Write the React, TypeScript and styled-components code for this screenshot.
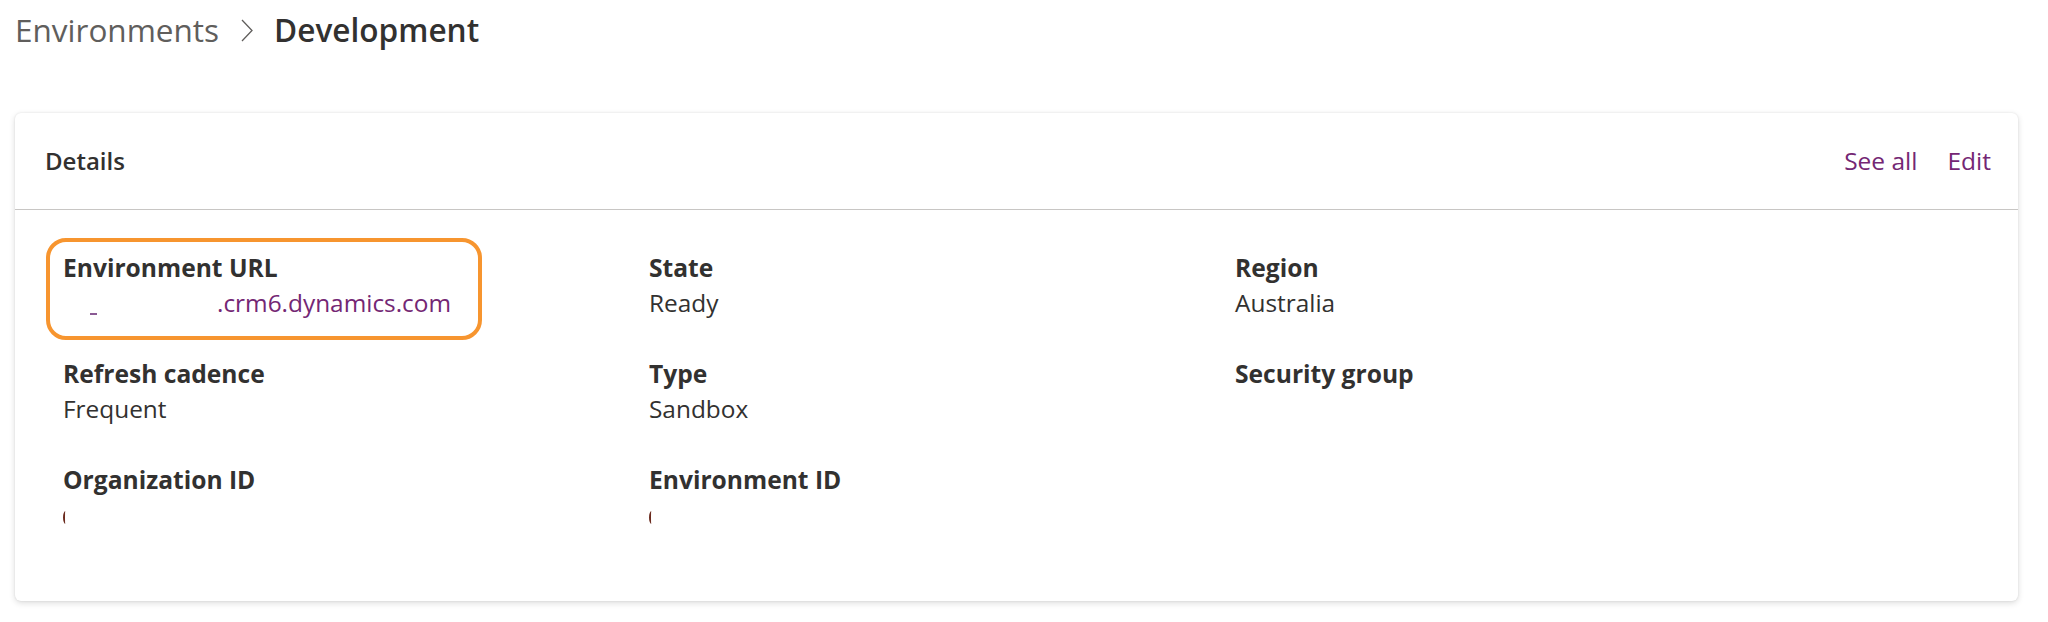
import { createGlobalStyle, styled } from "styled-components";

const GlobalStyle = createGlobalStyle`
	body {
		margin: 0;
		background: #ffffff;
		font-family: "Open Sans", "Noto Sans", "Liberation Sans", sans-serif;
		color: #323130;
	}
`;

interface detailType {
	label: string;
	value?: string;
	link?: boolean;
	redacted?: "url" | "id";
	highlighted?: boolean;
}

const details: detailType[] = [
	{ label: "Environment URL", value: ".crm6.dynamics.com", link: true, redacted: "url", highlighted: true },
	{ label: "State", value: "Ready" },
	{ label: "Region", value: "Australia" },
	{ label: "Refresh cadence", value: "Frequent" },
	{ label: "Type", value: "Sandbox" },
	{ label: "Security group" },
	{ label: "Organization ID", redacted: "id" },
	{ label: "Environment ID", redacted: "id" },
];

const App = () => {
	return (
		<Page>
			<GlobalStyle />
			<Breadcrumb>
				<span className="crumb">Environments</span>
				<svg width="12" height="23" viewBox="0 0 12 23">
					<polyline
						points="1,1 11,11.5 1,22"
						fill="none"
						stroke="#605e5c"
						strokeWidth="1.3"
					/>
				</svg>
				<span className="current">Development</span>
			</Breadcrumb>
			<Card>
				<CardHeader>
					<h3>Details</h3>
					<div className="actions">
						<a>See all</a>
						<a>Edit</a>
					</div>
				</CardHeader>
				<DetailGrid>
					{details.map((item) => (
						<DetailItem key={item.label} $highlighted={item.highlighted}>
							<Label>{item.label}</Label>
							<Value $link={item.link}>
								{item.redacted === "url" && <RedactedUrl />}
								{item.redacted === "id" && <RedactedId />}
								{item.value}
							</Value>
						</DetailItem>
					))}
				</DetailGrid>
			</Card>
		</Page>
	);
};

export default App;

const Page = styled.div`
	padding: 7px 30px 20px 15px;
`;

const Breadcrumb = styled.div`
	display: flex;
	align-items: center;
	height: 44px;

	.crumb {
		font-size: 31.5px;
		color: #605e5c;
		margin-right: 22px;
	}

	svg {
		margin-right: 21px;
		margin-top: 2px;
	}

	.current {
		font-size: 31.6px;
		font-weight: 600;
		color: #323130;
	}
`;

const Card = styled.div`
	margin-top: 62px;
	background: #ffffff;
	border-radius: 6px;
	box-shadow:
		0 2px 6px rgba(0, 0, 0, 0.14),
		0 0 2px rgba(0, 0, 0, 0.1);
`;

const CardHeader = styled.div`
	display: flex;
	justify-content: space-between;
	align-items: center;
	padding: 32px 27px 32px 30px;
	border-bottom: 1px solid #c8c6c4;

	h3 {
		margin: 0;
		font-size: 24px;
		line-height: 32px;
		font-weight: 600;
		color: #323130;
	}

	.actions {
		display: flex;
		gap: 30px;

		a {
			font-size: 24.5px;
			line-height: 32px;
			color: #742774;
			cursor: pointer;
		}
	}
`;

const DetailGrid = styled.div`
	display: grid;
	grid-template-columns: repeat(3, 586px);
	row-gap: 36px;
	padding: 40px 48px 69px 48px;
`;

const DetailItem = styled.div<{ $highlighted?: boolean }>`
	position: relative;
	display: flex;
	flex-direction: column;

	&::after {
		content: "";
		display: ${(props) => (props.$highlighted ? "block" : "none")};
		position: absolute;
		left: -17px;
		top: -12px;
		width: 428px;
		height: 94px;
		border: 4px solid #f7952f;
		border-radius: 20px;
	}
`;

const Label = styled.span`
	font-size: 24.6px;
	line-height: 35px;
	font-weight: 700;
	color: #323130;
`;

const Value = styled.span<{ $link?: boolean }>`
	display: flex;
	align-items: center;
	font-size: 24.4px;
	line-height: 35px;
	height: 35px;
	color: ${(props) => (props.$link ? "#742774" : "#323130")};
`;

const RedactedUrl = styled.span`
	position: relative;
	display: inline-block;
	width: 154px;
	height: 35px;

	&::after {
		content: "";
		position: absolute;
		left: 27px;
		top: 28px;
		width: 7px;
		height: 1.5px;
		background: #8a5a94;
	}
`;

const RedactedId = styled.span`
	display: inline-block;
	width: 3px;
	height: 13px;
	margin-top: 6px;
	border-left: 2px solid #6b2a1e;
	border-radius: 50% 0 0 50%;
`;
